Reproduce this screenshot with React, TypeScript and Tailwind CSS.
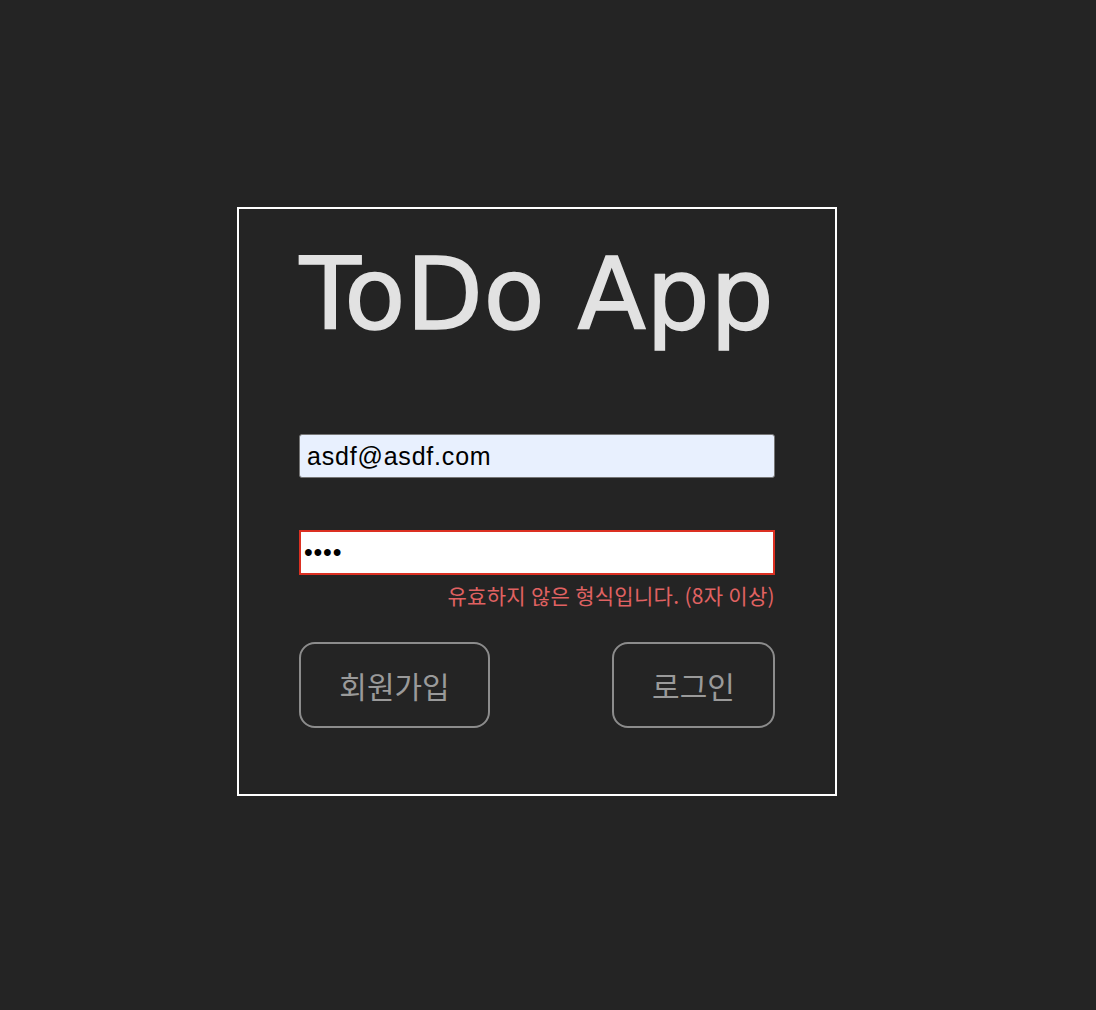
import { useState } from 'react';

export default function App() {
  const [email, setEmail] = useState('asdf@asdf.com');
  const [password, setPassword] = useState('asdf');

  const invalid = password.length < 8;

  return (
    <div className="min-h-[1010px] w-full bg-[#242424] pt-[207px] pl-[237px]">
      {/* Login card */}
      <div className="w-[600px] h-[589px] border-2 border-white px-[60px] flex flex-col">
        <h1 className="mt-[26px] h-[120px] text-center text-[100px] leading-[120px] tracking-[0.5px] text-[#e2e2e2] [-webkit-text-stroke:1.5px_#e2e2e2] font-['DejaVu_Sans',sans-serif]">
          ToDo App
        </h1>

        <form className="mt-[79px] flex flex-col" onSubmit={(e) => e.preventDefault()}>
          <input
            type="email"
            className="h-[44px] w-full rounded-[3px] border border-[#767676] bg-[#e8f0fe] px-[7px] text-[25px] tracking-[0.8px] text-black outline-none font-['Liberation_Sans',Arial,sans-serif]"
            value={email}
            onChange={(e) => setEmail(e.target.value)}
          />

          <input
            type="password"
            className={`mt-[52px] h-[45px] w-full border-2 bg-white px-[3px] text-[25px] tracking-[0.8px] text-black outline-none font-['Liberation_Sans',Arial,sans-serif] ${
              invalid ? 'border-[#dc3022]' : 'border-[#767676]'
            }`}
            value={password}
            onChange={(e) => setPassword(e.target.value)}
          />
          <p className="mt-[6px] h-[28px] text-right text-[21px] leading-[28px] tracking-[0.3px] text-[#e06262] font-['Noto_Sans_CJK_KR','Noto_Sans',sans-serif]">
            {invalid ? '유효하지 않은 형식입니다. (8자 이상)' : ''}
          </p>

          <div className="mt-[33px] flex justify-between">
            <button
              type="button"
              className="h-[86px] w-[191px] rounded-[16px] border-2 border-[#8c8c8c] text-[30px] text-[#9a9a9a] font-['Noto_Sans_CJK_KR','Noto_Sans',sans-serif]"
            >
              회원가입
            </button>
            <button
              type="submit"
              className="h-[86px] w-[163px] rounded-[16px] border-2 border-[#8c8c8c] text-[30px] text-[#9a9a9a] font-['Noto_Sans_CJK_KR','Noto_Sans',sans-serif]"
            >
              로그인
            </button>
          </div>
        </form>
      </div>
    </div>
  );
}
